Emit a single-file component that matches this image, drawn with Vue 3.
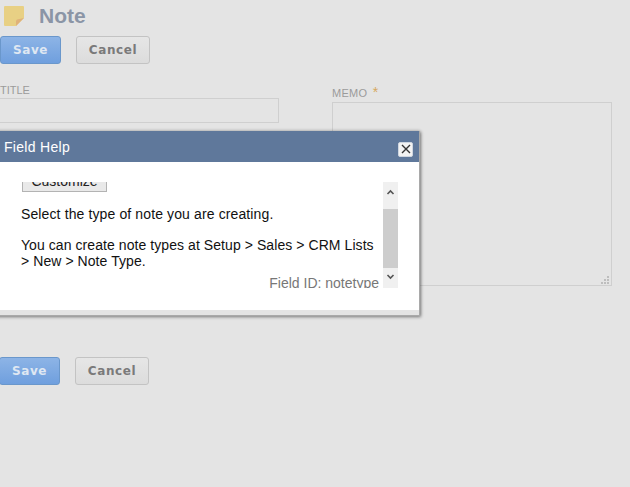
<script setup>
const buttons = [
  { label: 'Save', kind: 'primary' },
  { label: 'Cancel', kind: 'secondary' }
]
</script>

<template>
  <div class="page">
    <header class="title-row">
      <svg class="note-icon" width="20" height="20" viewBox="0 0 20 20">
        <path d="M1 0H19a1 1 0 0 1 1 1V12L12 20H1a1 1 0 0 1-1-1V1a1 1 0 0 1 1-1Z" fill="#e8d084" />
        <path d="M12 20V14.5L13 13.5L20 12Z" fill="#dfb27a" />
      </svg>
      <h1>Note</h1>
    </header>

    <div class="actions">
      <button v-for="b in buttons" :key="b.label" :class="['btn', b.kind]">{{ b.label }}</button>
    </div>

    <section class="fields">
      <div class="field left">
        <label>TITLE</label>
        <div class="input"></div>
      </div>
      <div class="field right">
        <label>MEMO <span class="req">*</span></label>
        <div class="textarea">
          <svg class="grip" width="9" height="9" viewBox="0 0 9 9" fill="#bdbdbd">
            <rect x="6" y="0" width="2" height="2" /><rect x="3" y="3" width="2" height="2" />
            <rect x="6" y="3" width="2" height="2" /><rect x="0" y="6" width="2" height="2" />
            <rect x="3" y="6" width="2" height="2" /><rect x="6" y="6" width="2" height="2" />
          </svg>
        </div>
      </div>
    </section>

    <div class="actions bottom">
      <button v-for="b in buttons" :key="b.label" :class="['btn', b.kind]">{{ b.label }}</button>
    </div>

    <div class="modal">
      <div class="modal-head">
        <span>Field Help</span>
        <button class="close" aria-label="Close">
          <svg width="10" height="10" viewBox="0 0 10 10"><path d="M1 1L9 9M9 1L1 9" stroke="#333" stroke-width="1.4" /></svg>
        </button>
      </div>
      <div class="modal-body">
        <div class="scroll-view">
          <div class="scroll-content">
            <button class="customize">Customize</button>
            <p class="first">Select the type of note you are creating.</p>
            <p class="second">You can create note types at Setup &gt; Sales &gt; CRM Lists &gt; New &gt; Note Type.</p>
            <div class="field-id">Field ID: notetype</div>
          </div>
        </div>
        <div class="scrollbar">
          <svg width="15" height="27" viewBox="0 0 15 27"><path d="M4.5 12L7.5 9L10.5 12" fill="none" stroke="#555" stroke-width="1.6" /></svg>
          <div class="thumb"></div>
          <svg width="15" height="20" viewBox="0 0 15 20"><path d="M4.5 7L7.5 10L10.5 7" fill="none" stroke="#555" stroke-width="1.6" /></svg>
        </div>
      </div>
    </div>
  </div>
</template>

<style scoped>
.page {
  position: relative;
  width: 630px;
  height: 487px;
  overflow: hidden;
  background: #e4e4e4;
  font-family: "Liberation Sans", Arial, sans-serif;
}
.title-row {
  display: flex;
  align-items: center;
  gap: 15px;
  height: 36px;
  padding-left: 4px;
  padding-bottom: 5px;
  box-sizing: border-box;
}
.note-icon { flex: none; margin-top: 1px; }
h1 {
  margin: 0;
  font-size: 21px;
  font-weight: 700;
  color: #8b95a6;
}
.actions {
  display: flex;
  gap: 15px;
}
.actions.bottom {
  margin-top: 71px;
  margin-left: -1px;
}
.btn {
  height: 28px;
  box-sizing: border-box;
  padding: 0;
  border-radius: 3px;
  font-family: "DejaVu Sans", Verdana, sans-serif;
  font-size: 12px;
  font-weight: 700;
  letter-spacing: 0.6px;
}
.primary {
  width: 61px;
  border: 1px solid #6a97cb;
  background: linear-gradient(#8db4e6, #6f9fde);
  color: #dfe7f2;
}
.secondary {
  width: 74px;
  border: 1px solid #c3c3c3;
  background: linear-gradient(#e6e6e6, #dcdcdc);
  color: #7a7a7a;
}
.fields {
  display: flex;
  margin-top: 19px;
}
.field label {
  display: block;
  font-size: 11px;
  line-height: 14px;
  color: #9b9b9b;
}
.left { width: 279px; flex: none; }
.left label { margin-bottom: 1px; }
.right { margin-left: 53px; padding-top: 2px; }
.right label { letter-spacing: 0.3px; margin-bottom: 2px; }
.req { color: #d6a860; font-size: 14px; margin-left: 2px; }
.input {
  height: 25px;
  box-sizing: border-box;
  margin-left: -10px;
  border: 1px solid #cfcfcf;
}
.textarea {
  position: relative;
  width: 280px;
  height: 184px;
  box-sizing: border-box;
  border: 1px solid #cfcfcf;
}
.grip { position: absolute; right: 1px; bottom: 0; }

.modal {
  position: absolute;
  left: -20px;
  top: 131px;
  width: 440px;
  height: 185px;
  box-sizing: border-box;
  background: #e4e4e4;
  border-right: 1px solid #a9a9a9;
  border-bottom: 1px solid #a9a9a9;
  box-shadow: 1px 1px 3px rgba(0, 0, 0, 0.45), 0 -1px 3px rgba(0, 0, 0, 0.12);
}
.modal-head {
  display: flex;
  align-items: center;
  justify-content: space-between;
  height: 31px;
  padding: 0 6px 0 24px;
  background: #5f789b;
  color: #fff;
  font-size: 14px;
  letter-spacing: 0.3px;
}
.close {
  display: flex;
  align-items: center;
  justify-content: center;
  width: 15px;
  height: 15px;
  margin-top: 5px;
  padding: 0;
  border: 1px solid #cfd6e0;
  border-radius: 2px;
  background: #f3f3f3;
}
.modal-body {
  display: flex;
  align-items: flex-start;
  height: 148px;
  padding: 20px 21px 0 41px;
  box-sizing: border-box;
  background: #fff;
}
.scroll-view {
  width: 362px;
  height: 106px;
  overflow: hidden;
}
.scroll-content {
  margin-top: -16px;
  font-size: 14px;
  line-height: 16px;
  color: #111;
}
.customize {
  display: block;
  width: 85px;
  height: 26px;
  margin-left: 1px;
  padding: 4px 0 0;
  border: 1px solid #b3b3b3;
  border-top: 0;
  background: #e9e9e9;
  font: 14px "Liberation Sans", Arial, sans-serif;
  color: #222;
}
p { margin: 14px 0 0; width: 356px; }
.first { letter-spacing: 0.12px; }
p + p { margin-top: 15px; }
.second { letter-spacing: 0.07px; }
.field-id {
  margin-top: 6px;
  text-align: right;
  color: #777;
  padding-right: 3px;
}
.scrollbar {
  display: flex;
  flex-direction: column;
  flex: none;
  width: 15px;
  height: 106px;
  margin-left: 1px;
  background: #f0f0f0;
}
.scrollbar svg { flex: none; display: block; }
.thumb { height: 59px; background: #cdcdcd; flex: none; }
</style>
